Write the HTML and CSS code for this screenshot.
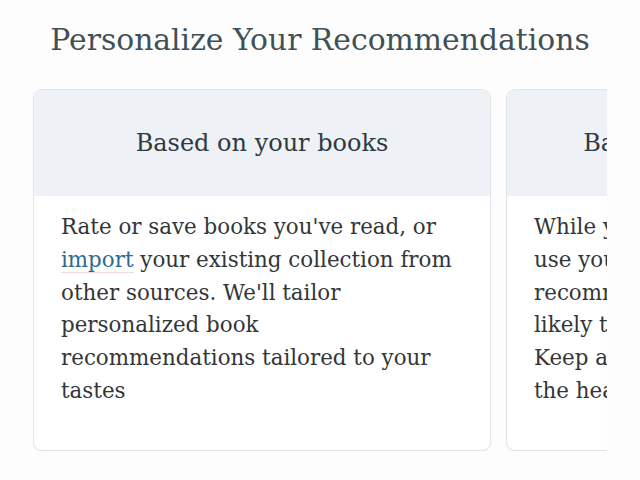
FILE: index.html
```html
<!DOCTYPE html>
<html>
<head>
<meta charset="utf-8">
<link rel="stylesheet" href="styles.css">
</head>
<body>
<h1 class="title">Personalize Your Recommendations</h1>
<div class="track">
  <div class="card">
    <div class="card-head">Based on your books</div>
    <div class="card-body">Rate or save books you've read, or<br><a class="link" href="#">import</a> your existing collection from<br>other sources. We'll tailor<br>personalized book<br>recommendations tailored to your<br>tastes</div>
  </div>
  <div class="card">
    <div class="card-head">Based on your favourites</div>
    <div class="card-body">While you browse, we'll<br>use your activity to tailor<br>recommendations you're<br>likely to enjoy.<br>Keep an eye out for<br>the heart icon</div>
  </div>
</div>
</body>
</html>
```
FILE: styles.css
```css
html, body {
  margin: 0;
  padding: 0;
  background: #fdfdfd;
  font-family: "DejaVu Serif", "Liberation Serif", serif;
}
.title {
  margin: 0;
  padding-top: 20px;
  height: 89px;
  box-sizing: border-box;
  text-align: center;
  font-weight: normal;
  font-size: 29.8px;
  line-height: 40px;
  color: #3f5156;
}
.track {
  display: flex;
  gap: 15px;
  margin-left: 33px;
  width: 574px;
  overflow: hidden;
}
.card {
  flex: 0 0 458px;
  height: 362px;
  box-sizing: border-box;
  border: 1px solid #e1e4e8;
  border-radius: 9px;
  background: #ffffff;
  overflow: hidden;
  box-shadow: 0 1px 2px rgba(0,0,0,0.05);
}
.card-head {
  height: 106px;
  background: #eef2f7;
  display: flex;
  align-items: center;
  justify-content: center;
  font-size: 24px;
  color: #2f3a42;
  white-space: nowrap;
}
.card-body {
  padding: 15px 20px 0 27px;
  font-size: 21.4px;
  line-height: 32.8px;
  color: #333638;
  white-space: nowrap;
}
.link {
  color: #2d6a8f;
  text-decoration: none;
  border-bottom: 1px solid #ecdcdc;
}
```
